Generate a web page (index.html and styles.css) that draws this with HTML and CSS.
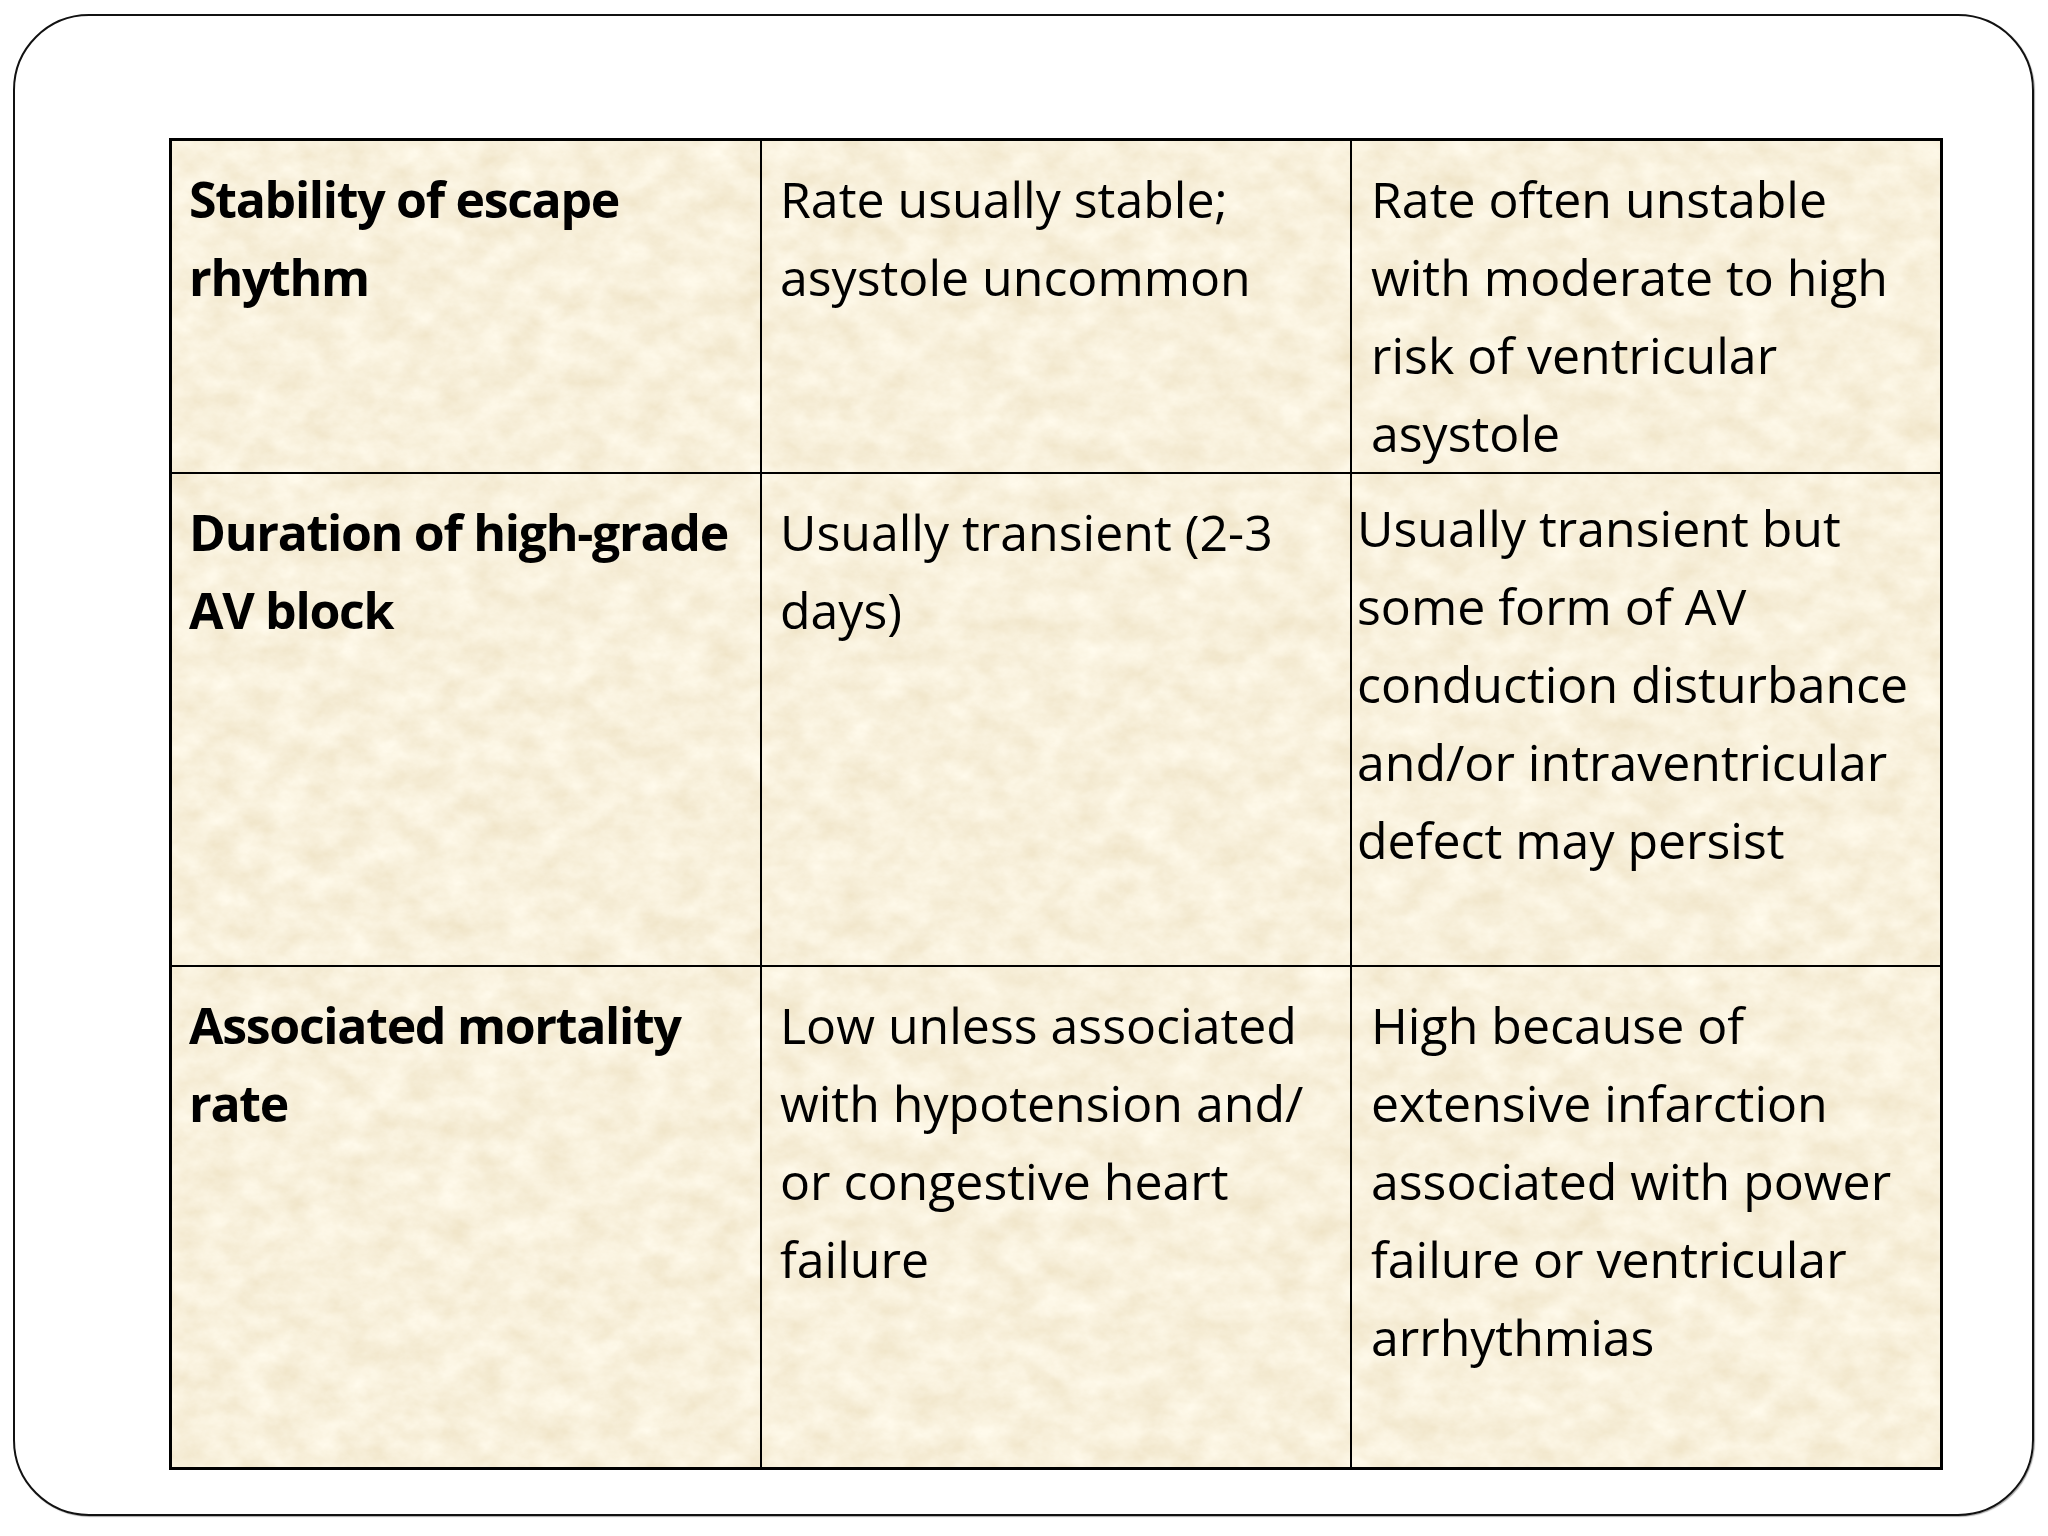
FILE: index.html
```html
<!DOCTYPE html>
<html>
<head>
<meta charset="utf-8">
<link rel="stylesheet" href="styles.css">
</head>
<body>
<div class="slide">
  <div class="table">
    <svg class="texture" width="100%" height="100%" preserveAspectRatio="none">
      <filter id="parch" x="0" y="0" width="100%" height="100%">
        <feTurbulence type="fractalNoise" baseFrequency="0.03 0.04" numOctaves="5" seed="7" result="n"/>
        <feColorMatrix in="n" type="matrix" values="0.16 0 0 0 0.86  0.22 0 0 0 0.765  0.32 0 0 0 0.555  0 0 0 0 1"/>
      </filter>
      <rect width="100%" height="100%" filter="url(#parch)"/>
    </svg>
    <div class="cell head">Stability of escape<br>rhythm</div>
    <div class="cell">Rate usually stable;<br>asystole uncommon</div>
    <div class="cell last">Rate often unstable<br>with moderate to high<br>risk of ventricular<br>asystole</div>

    <div class="cell head">Duration of high-grade<br>AV block</div>
    <div class="cell">Usually transient (2-3<br>days)</div>
    <div class="cell last tight">Usually transient but<br>some form of AV<br>conduction disturbance<br>and/or intraventricular<br>defect may persist</div>

    <div class="cell head bottom">Associated mortality<br>rate</div>
    <div class="cell bottom">Low unless associated<br>with hypotension and/<br>or congestive heart<br>failure</div>
    <div class="cell last bottom">High because of<br>extensive infarction<br>associated with power<br>failure or ventricular<br>arrhythmias</div>
  </div>
</div>
</body>
</html>
```
FILE: styles.css
```css
html, body {
  margin: 0;
  padding: 0;
  background: #ffffff;
}
body {
  width: 2048px;
  height: 1536px;
  overflow: hidden;
  font-family: "Open Sans", "Liberation Sans", sans-serif;
}
.slide {
  box-sizing: border-box;
  margin-left: 13px;
  margin-top: 14px;
  width: 2021px;
  height: 1502px;
  border: 2px solid #111;
  border-radius: 76px;
  padding-left: 154px;
  padding-top: 122px;
  box-shadow: 1px 1px 1px rgba(0,0,0,0.35);
}
.table {
  position: relative;
  box-sizing: border-box;
  width: 1774px;
  height: 1332px;
  border: 3px solid #000;
  display: grid;
  grid-template-columns: 590px 590px 588px;
  grid-template-rows: 333px 493px 500px;
  background: #efdfbb;
}
.texture {
  position: absolute;
  left: 0;
  top: 0;
  width: 100%;
  height: 100%;
  display: block;
}
.cell {
  position: relative;
  box-sizing: border-box;
  border-right: 2px solid #000;
  border-bottom: 2px solid #000;
  padding: 19px 10px 0 18px;
  font-size: 50px;
  line-height: 78px;
  color: #000;
  white-space: nowrap;
}
.row1 {
  padding-top: 18px;
}
.head {
  font-weight: 700;
  letter-spacing: -1.3px;
  padding-left: 17px;
}
.last {
  border-right: none;
  padding-left: 19px;
}
.tight {
  padding-left: 5px;
  padding-top: 15px;
}
.bottom {
  border-bottom: none;
}
```
